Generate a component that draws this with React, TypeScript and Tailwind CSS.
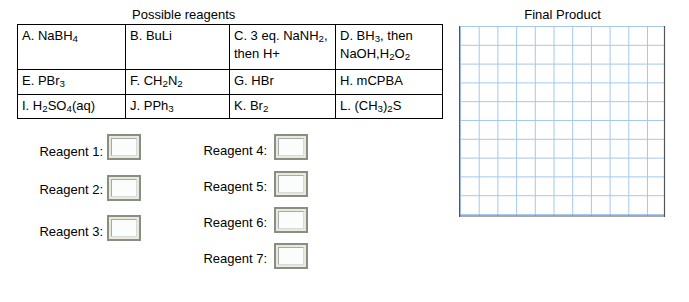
import type { ReactNode } from "react";

const cells: ReactNode[] = [
  <>A. NaBH<sub>4</sub></>,
  <>B. BuLi</>,
  <>C. 3 eq. NaNH<sub>2</sub>,<br />then H+</>,
  <>D. BH<sub>3</sub>, then<br />NaOH,H<sub>2</sub>O<sub>2</sub></>,
  <>E. PBr<sub>3</sub></>,
  <>F. CH<sub>2</sub>N<sub>2</sub></>,
  <>G. HBr</>,
  <>H. mCPBA</>,
  <>I. H<sub>2</sub>SO<sub>4</sub>(aq)</>,
  <>J. PPh<sub>3</sub></>,
  <>K. Br<sub>2</sub></>,
  <>L. (CH<sub>3</sub>)<sub>2</sub>S</>,
];

function DropBox() {
  return (
    <div className="w-[34px] h-[26px] shrink-0 border-2 border-[#878d87] bg-[#ebe9d7] p-[2px]">
      <div className="w-full h-full border border-[#a3acac] border-b-[#d6dcdc] border-r-[#d6dcdc] bg-[#fbfcfc]" />
    </div>
  );
}

// label mt = where the text sits against its box
function ReagentRow({ n, labelW, gap, labelMt, mt }: { n: number; labelW: string; gap: string; labelMt: string; mt: string }) {
  return (
    <div className={`flex items-start ${gap} ${mt}`}>
      <span className={`${labelW} ${labelMt} text-right leading-[15px]`}>Reagent {n}:</span>
      <DropBox />
    </div>
  );
}

function GraphPaper() {
  const xs = Array.from({ length: 11 }, (_, i) => 1.5 + i * 18.7);
  const ys = Array.from({ length: 11 }, (_, i) => 0.5 + i * 18.8);
  return (
    <svg width="207" height="191" viewBox="0 0 207 191" className="block">
      {xs.map((x) => (
        <line key={"v" + x} x1={x} y1={0} x2={x} y2={190} stroke="#a4c8ef" strokeWidth="1" />
      ))}
      {ys.map((y) => (
        <line key={"h" + y} x1={1} y1={y} x2={205} y2={y} stroke="#a4c8ef" strokeWidth="1" />
      ))}
      <line x1={0.5} y1={0} x2={0.5} y2={191} stroke="#555" strokeWidth="1.2" />
      <line x1={205.5} y1={0} x2={205.5} y2={191} stroke="#555" strokeWidth="1.2" />
      <line x1={0} y1={190} x2={206} y2={190} stroke="#555" strokeWidth="1.2" />
    </svg>
  );
}

export default function App() {
  return (
    <div className="w-[689px] h-[302px] bg-white text-black text-[13px] font-['Liberation_Sans',Arial,sans-serif] flex">
      <div className="pl-[17px] flex flex-col">
        <div className="mt-[7px] mb-[2px] leading-[15px] pl-[115px]">Possible reagents</div>
        <div className="grid grid-cols-[108px_104px_106px_107px] grid-rows-[45px_25px_24px] border-l border-t border-black w-fit">
          {cells.map((c, i) => (
            <div
              key={i}
              className={`border-r border-b border-black pl-[4px] ${i < 4 ? "pt-[2px] leading-[18px]" : "pt-[3px] leading-[15px]"}`}
            >
              {c}
            </div>
          ))}
        </div>

        <div className="flex mt-[15px]">
          <div className="flex flex-col">
            <ReagentRow n={1} labelW="w-[86px]" gap="gap-[4px]" labelMt="mt-[10px]" mt="mt-0" />
            <ReagentRow n={2} labelW="w-[86px]" gap="gap-[4px]" labelMt="mt-[7px]" mt="mt-[15px]" />
            <ReagentRow n={3} labelW="w-[86px]" gap="gap-[4px]" labelMt="mt-[9px]" mt="mt-[14px]" />
          </div>
          <div className="flex flex-col">
            <ReagentRow n={4} labelW="w-[126px]" gap="gap-[7px]" labelMt="mt-[9px]" mt="mt-0" />
            <ReagentRow n={5} labelW="w-[126px]" gap="gap-[7px]" labelMt="mt-[8px]" mt="mt-[11px]" />
            <ReagentRow n={6} labelW="w-[126px]" gap="gap-[7px]" labelMt="mt-[8px]" mt="mt-[10px]" />
            <ReagentRow n={7} labelW="w-[126px]" gap="gap-[7px]" labelMt="mt-[8px]" mt="mt-[10px]" />
          </div>
        </div>
      </div>

      <div className="ml-[16px] w-[207px] flex flex-col">
        <div className="mt-[7px] mb-[4px] leading-[15px] text-center">Final Product</div>
        <GraphPaper />
      </div>
    </div>
  );
}
